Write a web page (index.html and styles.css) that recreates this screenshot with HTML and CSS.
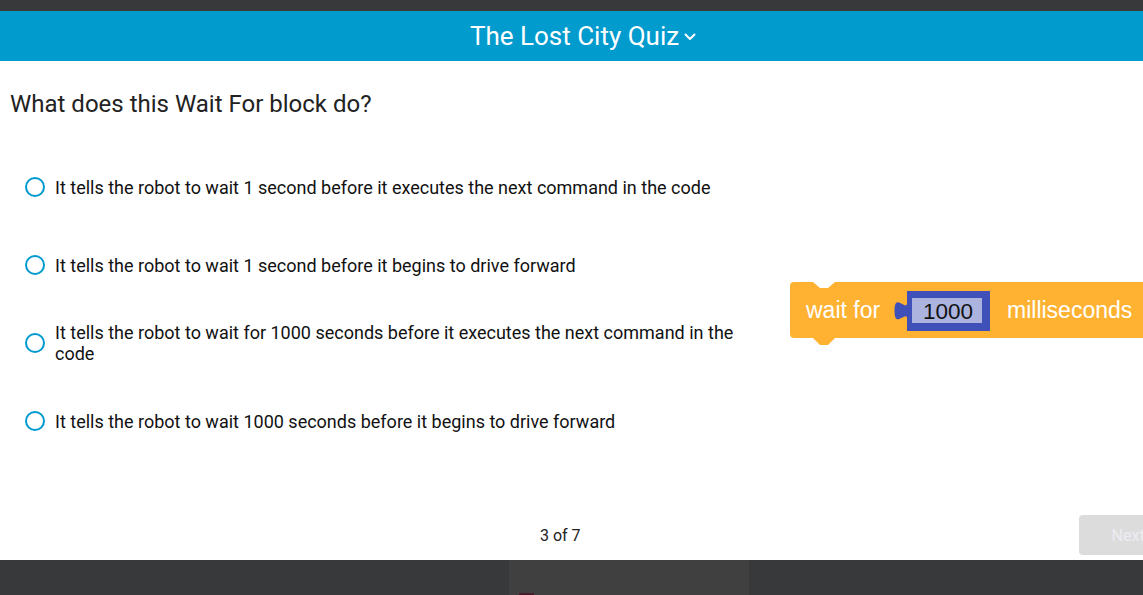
FILE: index.html
```html
<!DOCTYPE html>
<html lang="en">
<head>
<meta charset="utf-8">
<title>The Lost City Quiz</title>
<link rel="stylesheet" href="styles.css">
</head>
<body>
<div class="topbar"></div>
<header class="titlebar">
  <div class="title">The Lost City Quiz<svg class="chev" width="12" height="8" viewBox="0 0 12 8"><path d="M1.5 1.5 L6 6 L10.5 1.5" fill="none" stroke="#fff" stroke-width="2" stroke-linecap="round" stroke-linejoin="round"/></svg></div>
</header>
<main class="main">
  <h1 class="question">What does this Wait For block do?</h1>
  <div class="body">
    <ul class="options">
      <li class="option"><span class="radio"></span><span class="label">It tells the robot to wait 1 second before it executes the next command in the code</span></li>
      <li class="option"><span class="radio"></span><span class="label">It tells the robot to wait 1 second before it begins to drive forward</span></li>
      <li class="option"><span class="radio"></span><span class="label">It tells the robot to wait for 1000 seconds before it executes the next command in the code</span></li>
      <li class="option"><span class="radio"></span><span class="label">It tells the robot to wait 1000 seconds before it begins to drive forward</span></li>
    </ul>
    <div class="blockwrap">
      <svg class="block" width="362" height="66" viewBox="0 0 362 66">
        <path d="M4,0 H23 L30,6 H38 L45,0 H362 V56 H45 L38,63 H30 L23,56 H4 Q0,56 0,52 V4 Q0,0 4,0 Z" fill="#ffb232"/>
        <rect x="117" y="9" width="83" height="40" fill="#3f51b8"/>
        <path d="M117.5,19 c0,13 -13,-10.4 -13,9.75 s13,-3.25 13,9.75 Z" fill="#3f51b8"/>
        <rect x="122" y="16" width="70" height="25" fill="#adb3df"/>
        <text x="16" y="36" class="btxt">wait for</text>
        <text x="158" y="36.5" class="ntxt" text-anchor="middle">1000</text>
        <text x="217" y="36" class="btxt">milliseconds</text>
      </svg>
    </div>
  </div>
  <footer class="footer">
    <span class="count">3 of 7</span>
    <button class="next" type="button">Next</button>
  </footer>
</main>
<div class="bottombar"><div class="panel"><span class="tag"></span></div></div>
</body>
</html>
```
FILE: styles.css
```css
html, body {
  margin: 0;
  padding: 0;
  overflow: hidden;
  width: 1143px;
  height: 595px;
  background: #38393b;
  font-family: Roboto, "Liberation Sans", Arial, sans-serif;
}

.topbar {
  height: 11px;
  background: #38393b;
}

.titlebar {
  height: 50px;
  background: #019bce;
  display: flex;
  align-items: center;
  justify-content: center;
}

.title {
  position: relative;
  color: #fff;
  font-size: 26px;
  line-height: 30px;
  margin-left: 6px;
}

.chev {
  position: absolute;
  left: calc(100% + 5px);
  top: 12px;
}

.main {
  background: #fff;
  height: 499px;
  display: flex;
  flex-direction: column;
}

.question {
  margin: 29px 0 0 10px;
  font-size: 24px;
  font-weight: 400;
  line-height: 29px;
  color: #222;
}

.body {
  display: flex;
  align-items: center;
  margin-top: 29px;
}

.options {
  list-style: none;
  margin: 0;
  padding: 0 0 0 25px;
  width: 725px;
  flex: none;
}

.option {
  display: flex;
  align-items: center;
  gap: 10px;
  height: 78px;
}

.radio {
  flex: none;
  width: 16px;
  height: 16px;
  border: 2px solid #0199cf;
  border-radius: 50%;
}

.label {
  font-size: 18px;
  line-height: 21px;
  color: #111;
}

.blockwrap {
  margin-left: 40px;
  margin-top: 21px;
  flex: none;
}

.block {
  display: block;
}

.btxt {
  font-family: "Liberation Sans", Arial, sans-serif;
  font-size: 23px;
  fill: #fff;
}

.ntxt {
  font-family: "Liberation Sans", Arial, sans-serif;
  font-size: 22.5px;
  fill: #111;
}

.footer {
  margin-top: auto;
  display: flex;
  align-items: center;
  height: 40px;
  padding: 0 0 5px 540px;
}

.count {
  flex: none;
  white-space: nowrap;
  font-size: 16px;
  color: #222;
}

.next {
  margin-left: 498px;
  flex: none;
  width: 92px;
  height: 40px;
  border: none;
  border-radius: 4px;
  background: #dcdcdc;
  color: #ececf3;
  font-family: Roboto, "Liberation Sans", Arial, sans-serif;
  font-size: 16px;
  text-align: left;
  padding: 0 0 0 33px;
}

.bottombar {
  height: 35px;
  background: #38393b;
  padding-left: 509px;
}

.panel {
  width: 240px;
  height: 35px;
  background: #404040;
  position: relative;
}

.tag {
  position: absolute;
  left: 10px;
  bottom: 0;
  width: 15px;
  height: 2px;
  background: #4a1a2b;
}
```
